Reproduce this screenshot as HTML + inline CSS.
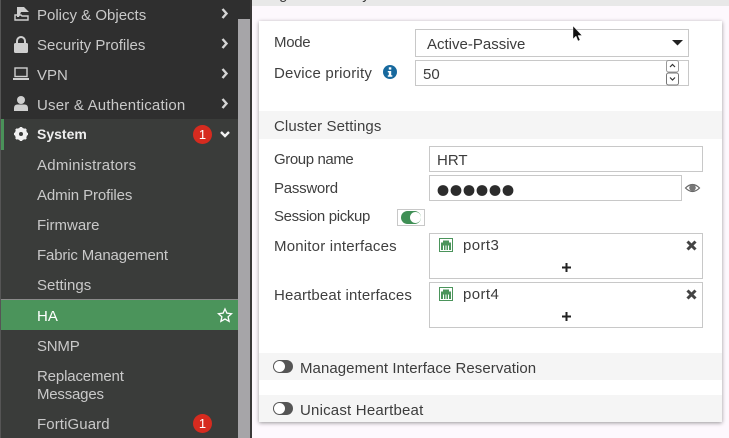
<!DOCTYPE html>
<html><head><meta charset="utf-8">
<style>
html,body{margin:0;padding:0}
body{width:729px;height:438px;overflow:hidden;position:relative;background:#fdf8fd;font-family:"Liberation Sans",sans-serif;font-size:15px;color:#3c3c3c}
.a{position:absolute;white-space:nowrap}
.t{position:absolute;white-space:nowrap;line-height:18px;height:18px;margin-top:1px}
.n{color:#c9c9c9;left:37px}
.box{position:absolute;box-sizing:border-box;background:#fff;border:1px solid #c8c8c8}
.bar{position:absolute;left:259px;width:463px;background:#f5f5f5}
.l{left:274px;color:#3f3f3f}
svg{position:absolute;overflow:visible}
.badge{position:absolute;width:19px;height:19px;border-radius:50%;background:#d62b1f;color:#fff;text-align:center;line-height:19px;font-size:13px}
</style></head><body>
<!-- sidebar -->
<div class="a" style="left:0;top:0;width:250px;height:438px;background:#2f2f2f"></div>
<div class="a" style="left:0;top:0;width:1px;height:438px;background:#555"></div>
<div class="a" style="left:1px;top:119px;width:237px;height:319px;background:#3a3c3a"></div>
<div class="a" style="left:238px;top:19px;width:12px;height:419px;background:#a6a5a8"></div>
<div class="a" style="left:250px;top:0;width:2px;height:438px;background:#3a3838"></div>
<div class="a" style="left:1px;top:119px;width:3px;height:31px;background:#4a9259"></div>
<div class="a" style="left:1px;top:299px;width:237px;height:1px;background:#8a8a8a"></div>
<div class="a" style="left:1px;top:300px;width:237px;height:30px;background:#4b945b"></div>

<svg style="left:0;top:0" width="240" height="438">
<!-- policy -->
<path d="M17 7h7l5 5 h-8l-2 5h-2z" fill="#cfcfcf"/><path d="M15 15h6l1 1 h6v4H15z" fill="none" stroke="#cfcfcf" stroke-width="1.4"/>
<!-- lock -->
<rect x="14" y="43" width="14" height="10" rx="1.5" fill="#cfcfcf"/><path d="M17 44v-3a4 4 0 0 1 8 0v3" fill="none" stroke="#cfcfcf" stroke-width="2"/>
<!-- vpn -->
<rect x="15" y="68" width="12" height="8.5" fill="none" stroke="#cfcfcf" stroke-width="1.4"/><path d="M13 79h16" stroke="#cfcfcf" stroke-width="2"/>
<!-- user -->
<circle cx="21" cy="100" r="4" fill="#cfcfcf"/><path d="M14 111v-3q0-3 3-3.500h8q3 .5 3 3.500v3z" fill="#cfcfcf"/>
<!-- gear -->
<circle cx="21" cy="134" r="4.600" fill="none" stroke="#f0f0f0" stroke-width="3.200"/>
<path d="M21 127v14M14 134h14M16 129l10 10M26 129l-10 10" stroke="#f0f0f0" stroke-width="2.600"/>
<circle cx="21" cy="134" r="2" fill="#3a3c3a"/>
<!-- chevrons -->
<g fill="none" stroke="#d5d5d5" stroke-width="2.400">
<path d="M222.500 9l4 4.500-4 4.500M222.500 39l4 4.500-4 4.500M222.500 69l4 4.500-4 4.500M222.500 99l4 4.500-4 4.500"/>
</g>
<path d="M221 132l4 4 4-4" fill="none" stroke="#f2f2f2" stroke-width="2.400"/>
<!-- star -->
<path d="M225 309l1.900 4.200 4.600.5-3.400 3.100 1 4.500-4.100-2.300-4.100 2.300 1-4.500-3.400-3.100 4.600-.5z" fill="none" stroke="#fff" stroke-width="1.300"/>
</svg>

<div class="t n" style="top:6px">Policy &amp; Objects</div>
<div class="t n" style="top:36px">Security Profiles</div>
<div class="t n" style="top:66px">VPN</div>
<div class="t n" style="top:96px;letter-spacing:.2px">User &amp; Authentication</div>
<div class="t" style="left:37px;top:124px;color:#eee;font-weight:bold;font-size:14px">System</div>
<div class="badge" style="left:193px;top:125px">1</div>
<div class="t n" style="top:156px;letter-spacing:.25px">Administrators</div>
<div class="t n" style="top:186px;letter-spacing:-.1px">Admin Profiles</div>
<div class="t n" style="top:216px">Firmware</div>
<div class="t n" style="top:246px;letter-spacing:-.15px">Fabric Management</div>
<div class="t n" style="top:276px">Settings</div>
<div class="t n" style="top:307px;color:#fff">HA</div>
<div class="t n" style="top:337px;letter-spacing:-.2px">SNMP</div>
<div class="t n" style="top:367px;letter-spacing:-.15px">Replacement</div>
<div class="t n" style="top:385px;letter-spacing:-.2px">Messages</div>
<div class="t n" style="top:415px;letter-spacing:.1px">FortiGuard</div>
<div class="badge" style="left:193px;top:414px">1</div>

<!-- main -->
<div class="a" style="left:252px;top:0;width:477px;height:6px;background:#e8e8e8;overflow:hidden"><div class="a" style="left:13px;top:-14px;line-height:18px;color:#3c3c3c">High Availability</div></div>
<div class="a" style="left:259px;top:21px;width:463px;height:401px;background:#fff;box-shadow:0 1px 4px rgba(0,0,0,.4)"></div>

<div class="t l" style="top:33px;letter-spacing:-.3px">Mode</div>
<div class="box" style="left:415px;top:29px;width:274px;height:28px"></div>
<div class="t" style="left:427px;top:35px">Active-Passive</div>
<svg style="left:672px;top:40px" width="11" height="6"><path d="M0 0h11L5.500 5.500z" fill="#222"/></svg>

<div class="t l" style="top:64px;letter-spacing:.2px">Device priority</div>
<svg style="left:383px;top:65px" width="14" height="14"><circle cx="7" cy="7" r="7" fill="#17699e"/><rect x="5.800" y="2.300" width="2.500" height="2.300" fill="#fff"/><path d="M4.800 6h3.400v4.300h1.100v1.400H4.800v-1.400h1V7.400h-1z" fill="#fff"/></svg>
<div class="box" style="left:415px;top:60px;width:274px;height:26px"></div>
<div class="t" style="left:423px;top:65px">50</div>
<svg style="left:666px;top:60px" width="14" height="26">
<rect x=".5" y=".5" width="12" height="11.500" rx="2" fill="#fff" stroke="#999"/><rect x=".5" y="13" width="12" height="12" rx="2" fill="#fff" stroke="#777"/>
<path d="M4 7l2.500-2.500L9 7M4 17.500L6.500 20 9 17.500" fill="none" stroke="#333" stroke-width="1.200"/>
</svg>

<div class="bar" style="top:111px;height:28px"></div>
<div class="t l" style="top:117px;letter-spacing:.1px">Cluster Settings</div>

<div class="t l" style="top:150px;letter-spacing:-.4px">Group name</div>
<div class="box" style="left:429px;top:146px;width:274px;height:26px"></div>
<div class="t" style="left:437px;top:151px">HRT</div>

<div class="t l" style="top:179px;letter-spacing:-.25px">Password</div>
<div class="box" style="left:429px;top:175px;width:253px;height:26px"></div>
<svg style="left:437px;top:185px" width="80" height="12" fill="#2c2c2c"><circle cx="6" cy="5.500" r="5.400"/><circle cx="19" cy="5.500" r="5.400"/><circle cx="32" cy="5.500" r="5.400"/><circle cx="45" cy="5.500" r="5.400"/><circle cx="58" cy="5.500" r="5.400"/><circle cx="71" cy="5.500" r="5.400"/></svg>
<svg style="left:685px;top:183px" width="15" height="10"><path d="M.5 5Q7.500-2 14.500 5 7.500 12 .5 5z" fill="none" stroke="#666" stroke-width="1.200"/><circle cx="7.500" cy="4.800" r="3.300" fill="#777"/></svg>

<div class="t l" style="top:207px;letter-spacing:-.35px">Session pickup</div>
<div class="box" style="left:397px;top:209px;width:28px;height:17px"></div>
<div class="a" style="left:401px;top:211px;width:20px;height:13px;border-radius:7px;background:#3f8f55"></div>
<div class="a" style="left:410px;top:212px;width:11px;height:11px;border-radius:50%;background:#fff"></div>

<div class="t l" style="top:237px;letter-spacing:.2px">Monitor interfaces</div>
<div class="box" style="left:429px;top:233px;width:274px;height:46px"></div>
<svg style="left:439px;top:238px" width="14" height="14"><rect x=".5" y=".5" width="13" height="13" fill="#fff" stroke="#4b945b"/><path d="M2 12V4.500h2V2.500h6v2h2V12z" fill="#4b945b"/><path d="M4.500 7.500V12M7 7.500V12M9.500 7.500V12" stroke="#fff" stroke-width="1"/></svg>
<div class="t" style="left:463px;top:236px;letter-spacing:.4px">port3</div>
<svg style="left:686px;top:240px" width="11" height="11"><path d="M1.500 1.500l8 8M9.500 1.500l-8 8" stroke="#444" stroke-width="3"/></svg>
<svg style="left:562px;top:263px" width="9" height="9"><path d="M4.500 0v9M0 4.500h9" stroke="#222" stroke-width="2"/></svg>

<div class="t l" style="top:286px;letter-spacing:.15px">Heartbeat interfaces</div>
<div class="box" style="left:429px;top:282px;width:274px;height:46px"></div>
<svg style="left:439px;top:287px" width="14" height="14"><rect x=".5" y=".5" width="13" height="13" fill="#fff" stroke="#4b945b"/><path d="M2 12V4.500h2V2.500h6v2h2V12z" fill="#4b945b"/><path d="M4.500 7.500V12M7 7.500V12M9.500 7.500V12" stroke="#fff" stroke-width="1"/></svg>
<div class="t" style="left:463px;top:285px;letter-spacing:.4px">port4</div>
<svg style="left:686px;top:289px" width="11" height="11"><path d="M1.500 1.500l8 8M9.500 1.500l-8 8" stroke="#444" stroke-width="3"/></svg>
<svg style="left:562px;top:312px" width="9" height="9"><path d="M4.500 0v9M0 4.500h9" stroke="#222" stroke-width="2"/></svg>

<div class="bar" style="top:353px;height:27px"></div>
<div class="a" style="left:273px;top:360px;width:20px;height:13px;border-radius:7px;background:#555"></div>
<div class="a" style="left:274px;top:361px;width:11px;height:11px;border-radius:50%;background:#fff"></div>
<div class="t" style="left:300px;top:359px;letter-spacing:.06px">Management Interface Reservation</div>

<div class="bar" style="top:395px;height:27px"></div>
<div class="a" style="left:273px;top:402px;width:20px;height:13px;border-radius:7px;background:#555"></div>
<div class="a" style="left:274px;top:403px;width:11px;height:11px;border-radius:50%;background:#fff"></div>
<div class="t" style="left:300px;top:401px;letter-spacing:.2px">Unicast Heartbeat</div>

<!-- cursor -->
<svg style="left:573px;top:26px" width="10" height="16"><path d="M0 0v13l3-3 2 5 2-1-2-4.500h4z" fill="#111" stroke="#fff" stroke-width=".4"/></svg>
</body></html>
